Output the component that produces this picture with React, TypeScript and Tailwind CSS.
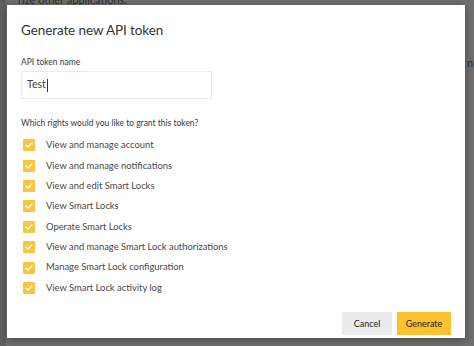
import React from 'react';

const rights = [
  'View and manage account',
  'View and manage notifications',
  'View and edit Smart Locks',
  'View Smart Locks',
  'Operate Smart Locks',
  'View and manage Smart Lock authorizations',
  'Manage Smart Lock configuration',
  'View Smart Lock activity log',
];

function Check() {
  return (
    <span className="flex h-[12px] w-[12px] shrink-0 items-center justify-center rounded-[1px] bg-[#f8c73e]">
      <svg viewBox="0 0 12 12" className="h-[10px] w-[10px]" fill="none">
        <path d="M2.5 6.2l2.3 2.2 4.7-4.8" stroke="white" strokeWidth="1.6" strokeLinecap="round" strokeLinejoin="round" />
      </svg>
    </span>
  );
}

export default function App() {
  return (
    <div className="relative h-[346px] w-[474px] overflow-hidden bg-[#6f6f6f] font-['Lato',sans-serif]">
      <div className="absolute left-[18px] top-[-8px] text-[11px] text-[#2c2c2c]">rize other applications.</div>
      <div className="absolute left-[467px] top-[55px] text-[11px] text-[#2c2c2c]">n</div>
      <div className="absolute left-0 top-0 h-full w-[6px] bg-[#5f5f5f]" />
      <div className="relative ml-[7px] mt-[5px] flex h-[333px] w-[458px] flex-col bg-white px-[14px] pb-[3px] pt-[15px] shadow-[0_2px_8px_rgba(0,0,0,0.35)]">
        <h2 className="text-[13.5px] leading-[20px] tracking-[-0.1px] text-[#333]">Generate new API token</h2>
        <label className="mt-[16px] text-[8.5px] leading-[12px] text-[#3a3a3a]">API token name</label>
        <div className="mt-[3px] flex h-[28px] w-[191px] items-center border border-[#ececec] px-[5px] text-[10.5px] text-[#444]">
          Test<span className="ml-[1px] h-[13px] w-px bg-[#333]" />
        </div>
        <p className="mt-[18px] text-[8.5px] leading-[12px] text-[#3a3a3a]">Which rights would you like to grant this token?</p>
        <ul className="mt-[6px] flex flex-col">
          {rights.map((r) => (
            <li key={r} className="flex h-[20.4px] items-center gap-[11px] pl-[2px] text-[9.4px] text-[#484848]">
              <Check />
              <span>{r}</span>
            </li>
          ))}
        </ul>
        <div className="mt-auto flex justify-end gap-[5px]">
          <button className="h-[23px] w-[50px] bg-[#ececec] text-[9px] text-[#222]">Cancel</button>
          <button className="h-[23px] w-[54px] bg-[#fbc12f] text-[9px] text-[#222]">Generate</button>
        </div>
      </div>
    </div>
  );
}
